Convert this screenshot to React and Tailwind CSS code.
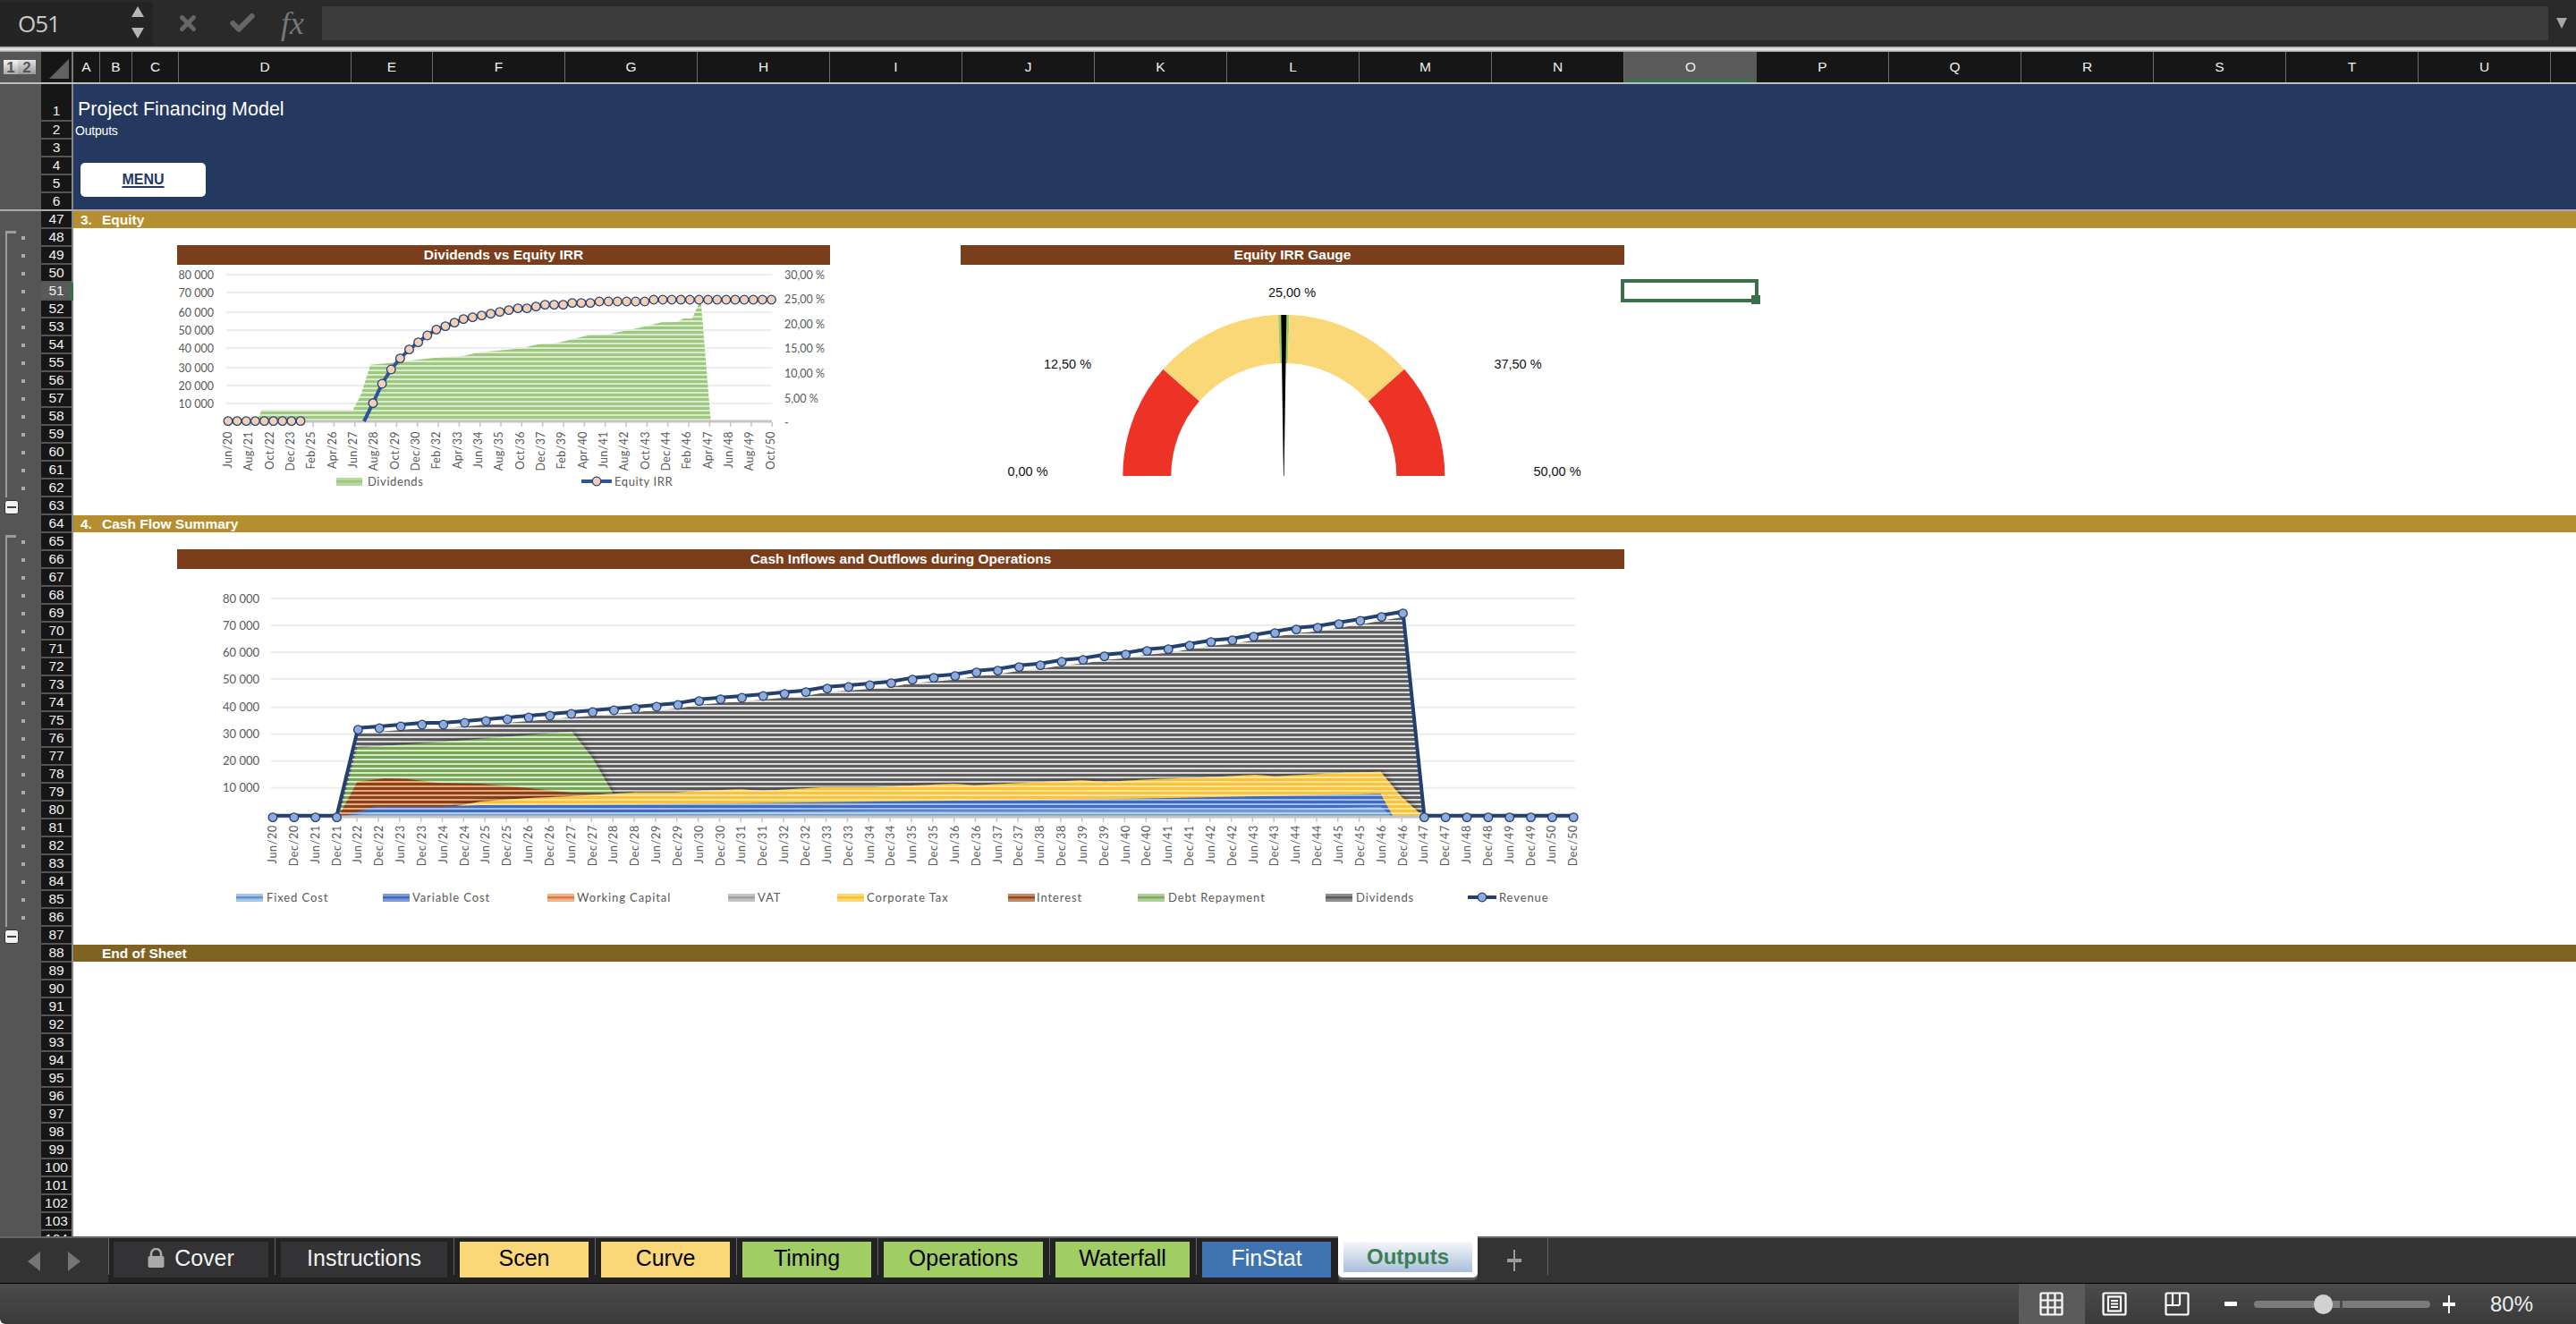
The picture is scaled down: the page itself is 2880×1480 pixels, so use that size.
import React from 'react';
import { X, Check } from 'lucide-react';

const SANS = 'font-["Liberation_Sans",Arial,sans-serif]';
const cols = [['A',30],['B',36],['C',52],['D',193],['E',91],['F',148],['G',148],['H',148],['I',148],['J',148],['K',148],['L',148],['M',148],['N',148],['O',148],['P',148],['Q',148],['R',148],['S',148],['T',148],['U',148],['',30]];
const rows = [];
for (let r = 47; r <= 104; r++) rows.push(r);

function Pattern({ id, dark, light, band = 2.5 }) {
  return (
    <pattern id={id} patternUnits="userSpaceOnUse" width="5" height="5">
      <rect width="5" height="5" fill={light} />
      <rect width="5" height={band} fill={dark} />
    </pattern>
  );
}

const FormulaBar = () => (
  <div className="flex h-[52px] items-center bg-[#2a2a2a]">
    <div className="flex h-[48px] w-[171px] items-center justify-between bg-[#242424] pl-[20px] pr-[9px]">
      <span className='font-["Open_Sans",sans-serif] text-[26px] leading-none tracking-[-1px] text-[#c9c9c9]'>O51</span>
      <svg width="16" height="38" viewBox="0 0 16 38"><path d="M8 0L15 12H1Z M1 24H15L8 36Z" fill="#b5b5b5" /></svg>
    </div>
    <X className="ml-[26px] text-[#666]" size={26} strokeWidth={4.5} />
    <Check className="ml-[32px] text-[#666]" size={32} strokeWidth={4.5} />
    <span className='ml-[27px] w-[46px] font-["Liberation_Serif",serif] text-[36px] italic leading-none text-[#777]'>fx</span>
    <div className="h-[38px] w-[2489px] bg-[#3b3b3b]" />
    <svg className="ml-[9px]" width="12" height="12" viewBox="0 0 12 12"><path d="M0 0H12L6 12Z" fill="#a8a8a8" /></svg>
  </div>
);

const ColumnHeader = () => (
  <div className="h-[36px] overflow-hidden border-b-2 border-[#bdbdbd]">
    <div className="flex h-[34px] bg-[#161616]">
      <div className="flex w-[46px] shrink-0 items-start bg-[#555] pl-[4px] pt-[9px]">
        <span className={`flex h-[16px] w-[16px] items-center justify-center bg-gradient-to-b from-[#f4f4f4] to-[#aaa] text-[17px] font-bold leading-none text-[#555] ${SANS}`}>1</span>
        <span className={`flex h-[16px] w-[20px] items-center justify-center bg-gradient-to-b from-[#e4e4e4] to-[#999] text-[17px] font-bold leading-none text-[#555] ${SANS}`}>2</span>
      </div>
      <div className="flex w-[36px] shrink-0 items-end justify-end border-r-2 border-[#777] pb-[4px] pr-[3px]">
        <svg width="22" height="22" viewBox="0 0 22 22"><path d="M22 0V22H0Z" fill="#626262" /></svg>
      </div>
      {cols.map(([c, w]) => (
        <div
          key={c || 'rest'}
          style={{ width: w }}
          className={`relative flex shrink-0 items-center justify-center text-[15.5px] leading-none text-[#f0f0f0] ${SANS} ${c === 'O' ? 'bg-[#5a5a5a]' : c ? 'border-r border-[#6a6a6a]' : ''}`}
        >
          {c}
          {c === 'O' && <div className="absolute bottom-0 left-0 h-[3px] w-full bg-[#3a7049]" />}
        </div>
      ))}
    </div>
  </div>
);

const RowNum = ({ n, tall, active }) => (
  <div className={`flex w-[34px] shrink-0 justify-center text-[15.5px] text-[#f0f0f0] ${SANS} ${active ? 'bg-[#5a5a5a]' : 'bg-[#161616]'} ${tall ? 'h-[40px] items-end pb-[1px] leading-[18px]' : 'h-[18px] items-center leading-none'}`}>
    {n}
  </div>
);

const Gutter = ({ n }) => {
  const inGroup = (n >= 48 && n <= 62) || (n >= 65 && n <= 86);
  const first = n === 48 || n === 65;
  const minus = n === 63 || n === 87;
  return (
    <div className="relative flex h-[20px] w-[46px] shrink-0 items-center bg-[#555]">
      {inGroup && <div className={`absolute left-[6px] w-[2px] bg-[#9c9c9c] ${first ? 'top-[2px] h-[18px]' : 'top-0 h-[20px]'}`} />}
      {first && <div className="absolute left-[6px] top-[2px] h-[3px] w-[12px] bg-[#9c9c9c]" />}
      {inGroup && <div className="ml-[24px] h-[4px] w-[4px] bg-[#aaa]" />}
      {minus && (
        <div className="ml-[5px] mt-[2px] flex h-[16px] w-[16px] items-center justify-center rounded-[3px] border border-[#333] bg-[#f2f2f2]">
          <div className="h-[2px] w-[10px] bg-[#444]" />
        </div>
      )}
    </div>
  );
};

const Row = ({ n }) => (
  <div className="relative flex h-[20px] shrink-0">
    <Gutter n={n} />
    <div className="h-[20px] w-[34px] bg-[#555]"><RowNum n={n} active={n === 51} /></div>
    <div className="h-[20px] w-[2px] bg-[#888]" />
    {n === 51 && <div className="absolute left-[78px] top-0 h-[20px] w-[4px] bg-[#3a7049]" />}
  </div>
);

const Band = ({ label, num, dark }) => (
  <div className={`flex h-[19px] shrink-0 items-center text-[15.5px] font-bold leading-none text-white ${SANS} ${dark ? 'bg-[#7f6323]' : 'bg-[#b58e2f]'}`}>
    <span className="ml-[8px] w-[24px]">{num}</span>
    <span>{label}</span>
  </div>
);

const TitleBar = ({ children, className }) => (
  <div className={`flex h-[22px] items-center justify-center bg-[#7a3e1c] text-[15.5px] font-bold leading-none text-white ${SANS} ${className}`}>{children}</div>
);

/* ---------- Chart 1 ---------- */
const z2 = (x, y) => [180 + x / 2.063, 260 + y / 3];
const irrZ = [632,632,632,632,632,632,632,632,632,null,null,null,null,null,null,null,572,507,459,422,392,368,345,325,314,302,290,284,278,272,266,260,254,254,248,242,242,242,236,236,236,231,231,231,231,231,231];
const irr = [];
for (let i = 0; i < 61; i++) {
  const z = i < irrZ.length ? irrZ[i] : 225;
  irr.push(z === null ? null : [255 + i * 10.125, 260 + z / 3]);
}
const divArea = [[222,632],[232,595],[443,595],[462,540],[483,443],[540,436],[580,428],[625,421],[700,413],[730,402],[780,395],[830,388],[875,373],[910,371],[990,343],[1030,341],[1100,320],[1155,301],[1190,300],[1205,288],[1225,288],[1245,225],[1268,632]].map(([x, y]) => z2(x, y).join(',')).join(' ');
const lbl1 = ['Jun/20','Aug/21','Oct/22','Dec/23','Feb/25','Apr/26','Jun/27','Aug/28','Oct/29','Dec/30','Feb/32','Apr/33','Jun/34','Aug/35','Oct/36','Dec/37','Feb/39','Apr/40','Jun/41','Aug/42','Oct/43','Dec/44','Feb/46','Apr/47','Jun/48','Aug/49','Oct/50'];
const chartText = { fontFamily: 'Lato, "Open Sans", sans-serif', fill: '#595959' };

const Swatch = ({ x, y, w, fill, tint }) => (
  <g>
    <rect x={x} y={y} width={w} height="9" fill={tint} />
    <rect x={x} y={y + 3} width={w} height="2.5" fill={fill} />
  </g>
);

const DividendsChart = () => {
  const ly = [307, 327, 349, 369, 389, 411, 431, 451];
  const lv = ['80 000','70 000','60 000','50 000','40 000','30 000','20 000','10 000'];
  const rv = ['30,00 %','25,00 %','20,00 %','15,00 %','10,00 %','5,00 %','-'];
  return (
    <svg width="730" height="280" viewBox="198 296 730 280" className="block">
      <defs><Pattern id="pDiv" dark="#9cc97d" light="#dcebcf" band="3" /></defs>
      {ly.map((y) => <rect key={y} x="253" y={y - 1} width="610" height="2" fill="#ededed" />)}
      {lv.map((t, i) => <text key={t} x="239" y={ly[i] + 4.5} textAnchor="end" fontSize="12.5" {...chartText}>{t}</text>)}
      {rv.map((t, i) => <text key={t} x="877" y={311.5 + i * 27.6} fontSize="12.5" {...chartText}>{t}</text>)}
      <polygon points={divArea} fill="url(#pDiv)" />
      <rect x="253" y="469.5" width="610" height="3" fill="#c4c4c4" />
      {lbl1.map((t, i) => {
        const x = 255 + i * 23.33;
        return (
          <g key={t}>
            <rect x={x + 1} y="472" width="1.5" height="5" fill="#c4c4c4" />
            <text transform={`translate(${x + 4},482) rotate(-90)`} textAnchor="end" fontSize="12.5" letterSpacing="0.4" {...chartText}>{t}</text>
          </g>
        );
      })}
      <polyline points={irr.slice(16).map((p) => p.join(',')).join(' ')} fill="none" stroke="#2f5597" strokeWidth="4" />
      <line x1="407" y1="471" x2={irr[16][0]} y2={irr[16][1]} stroke="#2f5597" strokeWidth="4" />
      {irr.filter(Boolean).map((p, i) => <circle key={i} cx={p[0]} cy={p[1]} r="4.8" fill="#f5cfb2" stroke="#25407a" strokeWidth="1.3" />)}
      <Swatch x={376} y={534} w={29} fill="#9cc97d" tint="#b7d8a0" />
      <text x="411" y="542.5" fontSize="13" letterSpacing="0.6" {...chartText}>Dividends</text>
      <line x1="650" y1="538" x2="684" y2="538" stroke="#2f5597" strokeWidth="4" />
      <circle cx="667" cy="538" r="4.8" fill="#f5cfb2" stroke="#25407a" strokeWidth="1.3" />
      <text x="687" y="542.5" fontSize="13" letterSpacing="0.6" {...chartText}>Equity IRR</text>
    </svg>
  );
};

/* ---------- Gauge ---------- */
const CX = 1435.3, CY = 532;
const seg = (a0, a1, R = 180, r = 126) => {
  const p = (rad, a) => {
    const t = (Math.PI * a) / 180;
    return `${(CX - rad * Math.cos(t)).toFixed(2)} ${(CY - rad * Math.sin(t)).toFixed(2)}`;
  };
  return `M${p(R, a0)} A${R} ${R} 0 0 1 ${p(R, a1)} L${p(r, a1)} A${r} ${r} 0 0 0 ${p(r, a0)} Z`;
};
const GaugeChart = () => {
  const t = { fontFamily: '"Liberation Sans", Arial, sans-serif', fill: '#111', fontSize: 14.5, textAnchor: 'middle' };
  return (
    <svg width="742" height="280" viewBox="1074 296 742 280" className="block">
      <path d={seg(0, 41.5)} fill="#ec3326" />
      <path d={seg(41.5, 88)} fill="#fad877" />
      <path d={seg(88, 92)} fill="#a2ce66" />
      <path d={seg(92, 138.5)} fill="#fad877" />
      <path d={seg(138.5, 180)} fill="#ec3326" />
      <polygon points="1432.3,352 1438.3,352 1435.6,532 1435,532" fill="#000" />
      <text x="1444.5" y="332" {...t}>25,00 %</text>
      <text x="1193.5" y="412" {...t}>12,50 %</text>
      <text x="1697" y="412" {...t}>37,50 %</text>
      <text x="1149" y="532" {...t}>0,00 %</text>
      <text x="1741" y="532" {...t}>50,00 %</text>
    </svg>
  );
};

/* ---------- Chart 3 ---------- */
const z4 = ([x, y]) => `${(180 + x / 1.96).toFixed(1)},${(600 + y / 3).toFixed(1)}`;
const z5 = ([x, y]) => `${(960 + x / 1.782).toFixed(1)},${(600 + y / 3).toFixed(1)}`;
const pts = (a, b = []) => [...a.map(z4), ...b.map(z5)].join(' ');
const revZ = [941,941,941,941,647,642,636,630,630,624,618,612,606,600,594,588,582,576,570,564,551,545,540,534,527,521,509,504,498,491,479,473,467,455,449,437,431,419,413,401,395,383,377,365,353,347,335,323,311,305,293,282,269,257];
const rev = [];
for (let i = 0; i < 62; i++) rev.push([305 + i * 23.84, 600 + (i < revZ.length ? revZ[i] : 941) / 3]);
const greyPts = [[377, 913], ...rev.slice(4, 54).map(([x, y]) => [x, y + 4]), [1591, 913]].map((p) => p.join(',')).join(' ');
const greenPts = pts([[390,938],[430,707],[600,690],[900,653],[945,740],[990,860],[900,905],[390,938]]);
const brownPts = pts([[390,935],[430,822],[490,810],[540,812],[610,826],[700,828],[800,842],[900,858],[990,862],[990,935]]);
const yellowPts = pts(
  [[600,938],[640,905],[700,888],[800,877],[900,870],[990,862],[1040,857],[1130,857],[1180,852],[1270,847],[1320,852],[1450,840],[1568,840]],
  [[100,835],[190,828],[230,833],[330,825],[445,817],[490,822],[600,812],[700,806],[790,798],[830,803],[950,793],[1040,788],[1080,870],[1125,938]]
);
const bluePts = pts(
  [[395,938],[470,905],[600,905],[700,900],[1000,898],[1300,893],[1568,888]],
  [[0,888],[500,880],[800,870],[950,865],[1040,862],[1065,938]]
);
const lightPts = pts([[395,938],[470,925],[1000,925],[1568,918]], [[800,915],[1040,905],[1062,938]]);
const lbl3 = [];
for (let y = 20; y <= 50; y++) { lbl3.push(`Jun/${y}`); lbl3.push(`Dec/${y}`); }
const legend = [
  ['#5f95d0', '#a7c5e6', 264, 298, 'Fixed Cost'],
  ['#3f6cc0', '#7b9ad6', 428, 461, 'Variable Cost'],
  ['#dd7c3a', '#f0b48c', 612, 645, 'Working Capital'],
  ['#a0a0a0', '#c4c4c4', 814, 847, 'VAT'],
  ['#fbc03a', '#fcd974', 936, 969, 'Corporate Tax'],
  ['#964b1e', '#c08a66', 1127, 1159, 'Interest'],
  ['#7fae60', '#b0cf99', 1272, 1306, 'Debt Repayment'],
  ['#5c5c5c', '#8e8e8e', 1482, 1516, 'Dividends'],
];
const CashChart = () => {
  const ly = [669, 699, 729, 759, 790.7, 820.7, 850.7, 880.7];
  const lv = ['80 000','70 000','60 000','50 000','40 000','30 000','20 000','10 000'];
  return (
    <svg width="1618" height="400" viewBox="198 636 1618 400" className="block">
      <defs>
        <Pattern id="pGrey" dark="#5f5f5f" light="#dcdcdc" band="3" />
        <Pattern id="pGreen" dark="#74a653" light="#dbe8cf" band="3" />
        <Pattern id="pBrown" dark="#8f3f14" light="#dfaa86" band="3" />
        <Pattern id="pYellow" dark="#fbc23a" light="#fde49b" band="3" />
        <Pattern id="pBlue" dark="#3f6cc0" light="#a3bce4" band="3" />
        <Pattern id="pLight" dark="#6f9dd3" light="#b6cfe9" band="3" />
        <filter id="soft" x="-5%" y="-5%" width="110%" height="110%"><feDropShadow dx="2" dy="-1" stdDeviation="2" floodOpacity="0.35" /></filter>
      </defs>
      {ly.map((y) => <rect key={y} x="302.5" y={y - 1} width="1459" height="2" fill="#ededed" />)}
      {lv.map((t, i) => <text key={t} x="290" y={ly[i] + 4.5} textAnchor="end" fontSize="13" {...chartText}>{t}</text>)}
      <polygon points={greyPts} fill="url(#pGrey)" />
      <polygon points={greenPts} fill="url(#pGreen)" filter="url(#soft)" />
      <polygon points={brownPts} fill="url(#pBrown)" />
      <polygon points={yellowPts} fill="url(#pYellow)" filter="url(#soft)" />
      <polygon points={bluePts} fill="url(#pBlue)" />
      <polygon points={lightPts} fill="url(#pLight)" />
      <rect x="302.5" y="911.5" width="1459" height="3" fill="#c4c4c4" />
      {lbl3.map((t, i) => {
        const x = 305 + i * 23.84;
        return (
          <g key={t + i}>
            <rect x={x - 2} y="914" width="1.5" height="5" fill="#c4c4c4" />
            <text transform={`translate(${x + 4},922) rotate(-90)`} textAnchor="end" fontSize="12.5" letterSpacing="0.7" {...chartText}>{t}</text>
          </g>
        );
      })}
      <polyline points={rev.map(([x, y]) => `${x},${y - 2}`).join(' ')} fill="none" stroke="#24406f" strokeWidth="4" />
      {rev.map(([x, y], i) => <circle key={i} cx={x} cy={y} r="4.8" fill="#8fabdc" stroke="#24406f" strokeWidth="1.3" />)}
      {legend.map(([d, l, sx, tx, t]) => (
        <g key={t}>
          <Swatch x={sx} y={999} w={30} fill={d} tint={l} />
          <text x={tx} y="1008" fontSize="13" letterSpacing="0.9" {...chartText}>{t}</text>
        </g>
      ))}
      <line x1="1641" y1="1003" x2="1673" y2="1003" stroke="#24406f" strokeWidth="4" />
      <circle cx="1657" cy="1003" r="4.8" fill="#8fabdc" stroke="#24406f" strokeWidth="1.3" />
      <text x="1676" y="1008" fontSize="13" letterSpacing="0.9" {...chartText}>Revenue</text>
    </svg>
  );
};

/* ---------- Sheet tabs ---------- */
const Divider = () => <div className="ml-[7px] mr-[6px] h-[41px] w-[1px] shrink-0 self-start bg-[#666]" />;
const tabs = [
  ['Instructions', 186, 'bg-[#333335] text-[#f2f2f2]'],
  ['Scen', 144, 'bg-[#fbd877] text-black'],
  ['Curve', 144, 'bg-[#fbd877] text-black'],
  ['Timing', 144, 'bg-[#a1cd65] text-black'],
  ['Operations', 178, 'bg-[#a1cd65] text-black'],
  ['Waterfall', 150, 'bg-[#a1cd65] text-black'],
  ['FinStat', 144, 'bg-[#3f74b0] text-white'],
];

const TabBar = () => (
  <div className={`flex h-[50px] bg-[#333] text-[25px] leading-none ${SANS}`}>
    <div className="flex w-[121px] shrink-0 items-center gap-[31px] bg-[#333] pl-[30px] pt-[2px]">
      <svg width="15" height="22" viewBox="0 0 15 22"><path d="M15 0V22L1 11Z" fill="#757575" /></svg>
      <svg width="15" height="22" viewBox="0 0 15 22"><path d="M0 0V22L14 11Z" fill="#757575" /></svg>
    </div>
    <div className="flex h-[50px] w-[1375px] shrink-0 bg-[#222]">
      <div className="h-[41px] w-[1px] shrink-0 bg-[#666]" />
      <div className="ml-[5px] mt-[4px] flex h-[40px] w-[173px] shrink-0 items-center justify-center gap-[11px] bg-[#333335] pb-[4px] text-[#f2f2f2]">
        <svg width="19" height="22" viewBox="0 0 19 22"><path d="M4 10V6.5a5.5 5.5 0 0 1 11 0V10" fill="none" stroke="#aaa" strokeWidth="2.5" /><rect x="0.5" y="9" width="18" height="13" rx="2" fill="#aaa" /></svg>
        <span>Cover</span>
      </div>
      {tabs.map(([t, w, c]) => (
        <React.Fragment key={t}>
          <Divider />
          <div style={{ width: w }} className={`mt-[4px] flex h-[40px] shrink-0 items-center justify-center pb-[4px] ${c}`}>{t}</div>
        </React.Fragment>
      ))}
    </div>
    <div className="-mt-[2px] flex h-[46px] w-[156px] shrink-0 justify-center rounded-b-[5px] bg-white pt-[6px] shadow-[0_3px_0_#5a5a5a]">
      <div className="flex h-[34px] w-[144px] items-center justify-center bg-gradient-to-b from-[#f5f7fa] to-[#a9bfdc] text-[24px] font-bold text-[#3d7f55]">Outputs</div>
    </div>
    <div className="ml-[33px] mt-[13px] h-[20px]">
      <svg width="16" height="24" viewBox="0 0 16 24"><path d="M7 0h2v24H7z M0 10h16v4H0z" fill="#9a9a9a" /></svg>
    </div>
    <div className="ml-[29px] h-[41px] w-[1px] bg-[#666]" />
  </div>
);

const StatusBar = () => (
  <div className="flex h-[45px] items-center justify-end rounded-bl-[6px] bg-gradient-to-b from-[#4b4b4b] to-[#3a3a3a]">
    <div className="flex h-[45px] w-[74px] items-center justify-center bg-[#5b5b5b]">
      <svg width="27" height="27" viewBox="0 0 27 27" fill="none" stroke="#fff" strokeWidth="2.2"><rect x="1.5" y="1.5" width="24" height="24" rx="1.5" /><path d="M9.5 1.5V25.5M17.5 1.5V25.5M1.5 9.5H25.5M1.5 17.5H25.5" /></svg>
    </div>
    <svg className="ml-[19px]" width="28" height="27" viewBox="0 0 28 27" fill="none" stroke="#fff" strokeWidth="2.2"><rect x="1.5" y="1.5" width="25" height="24" rx="1.5" /><rect x="7" y="5.5" width="14" height="16" /><path d="M10 10H18M10 13.5H18M10 17H18" /></svg>
    <svg className="ml-[42px]" width="28" height="27" viewBox="0 0 28 27" fill="none" stroke="#fff" strokeWidth="2.2"><rect x="1.5" y="1.5" width="25" height="24" rx="1.5" /><path d="M9 1.5V15M17 1.5V15M1.5 15H17" /></svg>
    <div className="ml-[39px] h-[5px] w-[14px] rounded-[1px] bg-white" />
    <div className="relative ml-[19px] h-[8px] w-[197px] rounded-full bg-[#7c7c7c]">
      <div className="absolute left-[67px] top-[-7px] h-[22px] w-[21px] rounded-full bg-[#d2d2d2]" />
      <div className="absolute left-[96px] top-[-1px] h-[10px] w-[3px] rounded-full bg-[#4b4b4b]" />
    </div>
    <svg className="ml-[14px]" width="14" height="20" viewBox="0 0 14 20"><path d="M6 0h2v20H6z M0 8h14v4H0z" fill="#fff" /></svg>
    <span className={`ml-[39px] mr-[48px] text-[24px] leading-none text-[#eee] ${SANS}`}>80%</span>
  </div>
);

export default function App() {
  return (
    <div className="flex h-[1480px] w-[2880px] flex-col overflow-hidden bg-white">
      <FormulaBar />
      <div className="h-[6px] bg-gradient-to-b from-[#9a9a9a] via-[#f2f2f2] to-[#9a9a9a]" />
      <ColumnHeader />

      {/* frozen header rows */}
      <div className="flex h-[140px] shrink-0">
        <div className="flex w-[46px] shrink-0 bg-[#555]" />
        <div className="w-[34px] shrink-0 bg-[#555]">
          <div className="mb-[2px]"><RowNum n={1} tall /></div>
          {[2, 3, 4, 5, 6].map((n) => <div key={n} className="mb-[2px]"><RowNum n={n} /></div>)}
        </div>
        <div className="w-[2px] shrink-0 bg-[#888]" />
        <div className={`flex flex-1 flex-col bg-[#253860] text-white ${SANS}`}>
          <div className="ml-[5px] mt-[16px] text-[21.5px] leading-[24px]">Project Financing Model</div>
          <div className="ml-[2px] mt-[4px] text-[14px] leading-[16px] tracking-[-0.2px]">Outputs</div>
          <div className="ml-[8px] mt-[28px] flex h-[38px] w-[140px] items-center justify-center rounded-[5px] bg-white text-[16px] font-bold text-[#253860] underline decoration-2 underline-offset-2">MENU</div>
        </div>
      </div>
      <div className="h-[2px] shrink-0 bg-[#aaa]" />

      {/* scrolling sheet */}
      <div className="flex h-[1146px] shrink-0 overflow-hidden">
        <div className="w-[82px] shrink-0 overflow-hidden bg-[#555]">
          {rows.map((n) => <Row key={n} n={n} />)}
        </div>
        <div className="flex min-w-0 flex-1 flex-col bg-white">
          <Band num="3." label="Equity" />
          <div className="relative h-[321px] shrink-0 pt-[19px]">
            <div className="flex">
              <div className="ml-[116px] w-[730px] shrink-0">
                <TitleBar>Dividends vs Equity IRR</TitleBar>
                <DividendsChart />
              </div>
              <div className="ml-[146px] w-[742px] shrink-0">
                <TitleBar>Equity IRR Gauge</TitleBar>
                <GaugeChart />
              </div>
            </div>
            <div className="absolute left-[1730px] top-[57px] h-[26px] w-[154px] border-[4px] border-[#3a7049]" />
            <div className="absolute left-[1876px] top-[75px] h-[10px] w-[10px] bg-[#3a7049]" />
          </div>
          <Band num="4." label="Cash Flow Summary" />
          <div className="h-[461px] shrink-0 pt-[19px]">
            <div className="ml-[116px] w-[1618px]">
              <TitleBar>Cash Inflows and Outflows during Operations</TitleBar>
              <CashChart />
            </div>
          </div>
          <Band num="" label="End of Sheet" dark />
        </div>
      </div>

      <div className="h-[2px] shrink-0 bg-[#666]" />
      <TabBar />
      <div className="h-[1px] shrink-0 bg-black" />
      <StatusBar />
    </div>
  );
}
